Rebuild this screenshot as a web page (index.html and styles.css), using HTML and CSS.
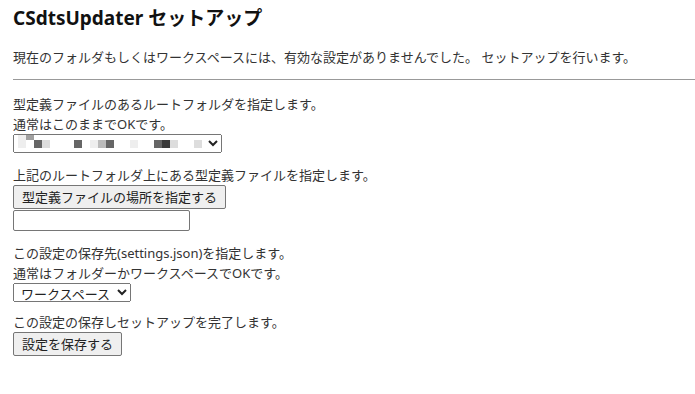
FILE: index.html
```html
<!DOCTYPE html>
<html lang="ja">
<head>
<meta charset="utf-8">
<title>CSdtsUpdater セットアップ</title>
<link rel="stylesheet" href="styles.css">
</head>
<body>
<h1 class="title">CSdtsUpdater セットアップ</h1>
<p class="intro">現在のフォルダもしくはワークスペースには、有効な設定がありませんでした。 セットアップを行います。</p>
<hr class="rule">
<section class="step step-first">
  <div class="line">型定義ファイルのあるルートフォルダを指定します。</div>
  <div class="line">通常はこのままでOKです。</div>
  <div class="select-wrap">
    <select class="ctrl select-root"><option></option></select>
    <div class="mosaic" aria-hidden="true">
      <span class="m c1 both light"></span>
      <span class="m c2 top mid"></span>
      <span class="m c3 dark"></span>
      <span class="m c4 pale"></span>
      <span class="m c8 dark"></span>
      <span class="m c10 light"></span>
      <span class="m c11 grey"></span>
      <span class="m c12 dark"></span>
      <span class="m c15 light"></span>
      <span class="m c18 dark"></span>
      <span class="m c19 darker"></span>
      <span class="m c20 pale"></span>
      <span class="m c23 pale"></span>
    </div>
  </div>
</section>
<section class="step">
  <div class="line">上記のルートフォルダ上にある型定義ファイルを指定します。</div>
  <button class="ctrl btn" type="button">型定義ファイルの場所を指定する</button>
  <input class="ctrl field" type="text">
</section>
<section class="step">
  <div class="line">この設定の保存先(settings.json)を指定します。</div>
  <div class="line">通常はフォルダーかワークスペースでOKです。</div>
  <select class="ctrl select-target"><option>ワークスペース</option><option>フォルダー</option></select>
</section>
<section class="step step-last">
  <div class="line">この設定の保存しセットアップを完了します。</div>
  <button class="ctrl btn" type="button">設定を保存する</button>
</section>
</body>
</html>
```
FILE: styles.css
```css
html, body {
  background: #ffffff;
}
body {
  margin: 0;
  padding: 0 0 0 13px;
  font-family: "Noto Sans", "Noto Sans CJK JP", sans-serif;
  font-size: 13px;
  color: #333333;
}
.title {
  margin: 6px 0 0;
  font-size: 19px;
  line-height: 24px;
  font-weight: 700;
  color: #111111;
}
.intro {
  margin: 17px 0 0;
  line-height: 20px;
}
.rule {
  margin: 12px 0 0;
  border: 0;
  border-top: 1px solid #999999;
  height: 0;
}
.step {
  display: flex;
  flex-direction: column;
  align-items: flex-start;
  margin-top: 12px;
}
.step-first {
  margin-top: 14px;
}
.step-last {
  margin-top: 10px;
}
.line {
  line-height: 20px;
}
.ctrl {
  font-family: "Noto Sans", "Noto Sans CJK JP", sans-serif;
  font-size: 13px;
  color: #222222;
  box-sizing: border-box;
  margin: 0;
}
.select-wrap {
  position: relative;
  display: inline-block;
}
.select-root {
  width: 209px;
  height: 19px;
  display: block;
}
.select-target {
  width: 118px;
  height: 19px;
  padding: 0 0 0 3px;
}
.mosaic {
  position: absolute;
  left: 5px;
  top: 1px;
  display: grid;
  grid-template-columns: repeat(23, 8px);
  grid-template-rows: 5px 8px;
}
.m { display: block; grid-row: 2; }
.m.both { grid-row: 1 / 3; }
.m.top { grid-row: 1; }
.light { background: #eeeeee; }
.pale { background: #dddddd; }
.grey { background: #bbbbbb; }
.mid { background: #a0a0a0; }
.dark { background: #666666; }
.darker { background: #3a3a3a; }
.c1 { grid-column: 1; }
.c2 { grid-column: 2; }
.c3 { grid-column: 3; }
.c4 { grid-column: 4; }
.c8 { grid-column: 8; }
.c10 { grid-column: 10; }
.c11 { grid-column: 11; }
.c12 { grid-column: 12; }
.c15 { grid-column: 15; }
.c18 { grid-column: 18; }
.c19 { grid-column: 19; }
.c20 { grid-column: 20; }
.c23 { grid-column: 23; }
.btn {
  height: 24px;
  padding: 0 8px;
  line-height: 20px;
  background: #efefef;
  border: 1px solid #767676;
  border-radius: 2px;
}
.field {
  width: 177px;
  height: 21px;
  margin-top: 1px;
  border: 1px solid #767676;
  border-radius: 2px;
  padding: 1px 2px;
}
```
